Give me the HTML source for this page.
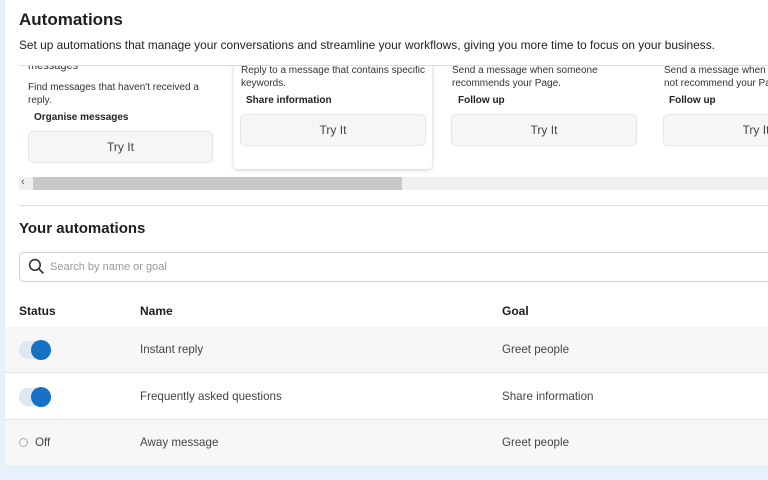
<!DOCTYPE html>
<html><head><style>
*{margin:0;padding:0;box-sizing:border-box}
body{width:768px;height:480px;overflow:hidden;background:#e8f1fb;font-family:"Liberation Sans",sans-serif;color:#1c1e21;position:relative}
.main{position:absolute;left:5px;top:0;width:763px;height:465px;background:#fff}
.a{position:absolute;white-space:nowrap}
.card{position:absolute;background:#fff}
.btn{position:absolute;height:32px;background:#f5f6f7;border:1px solid #e4e6eb;border-radius:5px;font-size:12px;color:#444;text-align:center;line-height:30px}
.t{font-size:10px;color:#333}
.b{font-size:10px;font-weight:bold;color:#222}
.tog{position:absolute;width:32px;height:18px;border-radius:9px;background:#dde8f3}
.tog i{position:absolute;right:0;top:-1px;width:20px;height:20px;border-radius:50%;background:#1670c4}
.row{position:absolute;left:5px;width:763px;font-size:11px;color:#444}
.c{font-size:11.6px;color:#444}
</style></head><body>
<div class="main"></div>
<div class="a" style="left:19px;top:10px;font-size:17px;font-weight:bold">Automations</div>
<div class="a" style="left:19px;top:38px;font-size:11.9px;color:#222">Set up automations that manage your conversations and streamline your workflows, giving you more time to focus on your business.</div>
<div class="a" style="left:19px;top:65px;width:749px;height:1px;background:#ddd"></div>
<div style="position:absolute;left:0;top:66px;width:768px;height:110px;overflow:hidden">
 <div class="a t" style="left:28px;top:-6px;font-size:11px">messages</div>
 <div class="a t" style="left:28px;top:15px;line-height:13px">Find messages that haven't received a<br>reply.</div>
 <div class="a b" style="left:34px;top:46px">Organise messages</div>
 <div class="btn" style="left:28px;top:65px;width:185px">Try It</div>
 <div class="card" style="left:234px;top:-10px;width:198px;height:113px;box-shadow:0 1px 4px rgba(0,0,0,.2);border-radius:4px"></div>
 <div class="a t" style="left:241px;top:-2px;line-height:13px">Reply to a message that contains specific<br>keywords.</div>
 <div class="a b" style="left:246px;top:29px">Share information</div>
 <div class="btn" style="left:240px;top:48px;width:186px">Try It</div>
 <div class="a t" style="left:452px;top:-2px;line-height:13px">Send a message when someone<br>recommends your Page.</div>
 <div class="a b" style="left:458px;top:29px">Follow up</div>
 <div class="btn" style="left:451px;top:48px;width:186px">Try It</div>
 <div class="a t" style="left:664px;top:-2px;line-height:13px">Send a message when someone does<br>not recommend your Page.</div>
 <div class="a b" style="left:669px;top:29px">Follow up</div>
 <div class="btn" style="left:663px;top:48px;width:186px">Try It</div>
</div>
<div class="a" style="left:19px;top:177px;width:749px;height:13px;background:#f0f0f0"></div>
<div class="a" style="left:33px;top:177px;width:369px;height:13px;background:#c8c8c8"></div>
<div class="a" style="left:21px;top:176px;font-size:11px;color:#555">‹</div>
<div class="a" style="left:19px;top:205px;width:749px;height:1px;background:#ddd"></div>
<div class="a" style="left:19px;top:220px;font-size:15px;font-weight:bold">Your automations</div>
<div class="a" style="left:19px;top:252px;width:760px;height:30px;border:1px solid #ccd0d5;border-radius:5px"></div>
<svg class="a" style="left:28px;top:258px" width="17" height="17" viewBox="0 0 16 16"><circle cx="6.5" cy="6.5" r="5" fill="none" stroke="#333" stroke-width="1.5"/><path d="M10 10l4.5 4.5" stroke="#333" stroke-width="1.6"/></svg>
<div class="a" style="left:50px;top:261px;font-size:11px;color:#999">Search by name or goal</div>
<div class="a" style="left:19px;top:304px;font-size:12px;font-weight:bold">Status</div>
<div class="a" style="left:140px;top:304px;font-size:12px;font-weight:bold">Name</div>
<div class="a" style="left:502px;top:304px;font-size:12px;font-weight:bold">Goal</div>
<div class="row" style="top:327px;height:46px;background:#f7f7f7;border-bottom:1px solid #e2e2e2"></div>
<div class="row" style="top:374px;height:46px;background:#fff;border-bottom:1px solid #e2e2e2"></div>
<div class="row" style="top:420px;height:45px;background:#f7f7f7"></div>
<div class="tog" style="left:19px;top:341px"><i></i></div>
<div class="tog" style="left:19px;top:388px"><i></i></div>
<div class="a" style="left:19px;top:438px;width:9px;height:9px;border:1px solid #aaa;border-radius:50%"></div>
<div class="a c" style="left:35px;top:436px">Off</div>
<div class="a c" style="left:140px;top:343px">Instant reply</div>
<div class="a c" style="left:502px;top:343px">Greet people</div>
<div class="a c" style="left:140px;top:390px">Frequently asked questions</div>
<div class="a c" style="left:502px;top:390px">Share information</div>
<div class="a c" style="left:140px;top:436px">Away message</div>
<div class="a c" style="left:502px;top:436px">Greet people</div>
</body></html>
